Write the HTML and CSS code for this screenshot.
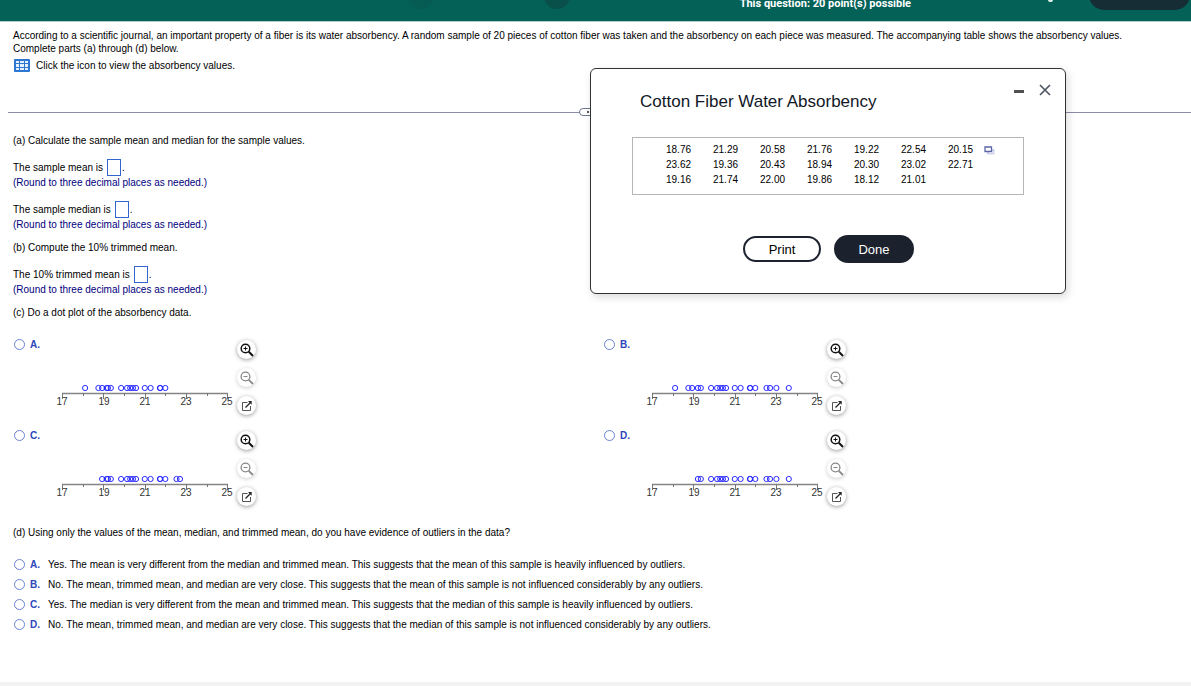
FILE: index.html
```html
<!DOCTYPE html>
<html lang="en">
<head>
<meta charset="utf-8">
<title>Cotton Fiber Water Absorbency</title>
<link rel="stylesheet" href="styles.css">
</head>
<body>
<svg class="defs" aria-hidden="true">
  <defs>
    <g id="axis">
      <path d="M10 21.5H176" stroke="#858585" stroke-width="1.300" fill="none"/>
      <path d="M10.5 21v6M51.5 21v6M93.5 21v6M134.5 21v6M175.500 21v6M31.5 21v3M72.5 21v3M113.5 21v3M155.5 21v3" stroke="#777" fill="none"/>
      <text x="10" y="33">17</text><text x="52" y="33">19</text><text x="93" y="33">21</text><text x="134" y="33">23</text><text x="175" y="33">25</text>
    </g>
    <g id="middle">
      <circle cx="55.9" cy="16" r="2.6"/><circle cx="58.8" cy="16" r="2.6"/><circle cx="69.1" cy="16" r="2.6"/><circle cx="75.1" cy="16" r="2.6"/><circle cx="78.2" cy="16" r="2.6"/><circle cx="80.9" cy="16" r="2.6"/><circle cx="84" cy="16" r="2.6"/><circle cx="92.8" cy="16" r="2.6"/><circle cx="98.6" cy="16" r="2.6"/><circle cx="107.9" cy="16" r="2.6"/><circle cx="108.3" cy="16" r="2.6"/><circle cx="113.3" cy="16" r="2.6"/>
    </g>
    <g id="low"><circle cx="33.1" cy="16" r="2.6"/><circle cx="46.4" cy="16" r="2.6"/><circle cx="50.1" cy="16" r="2.6"/></g>
    <g id="high"><circle cx="124.5" cy="16" r="2.6"/><circle cx="128" cy="16" r="2.6"/><circle cx="134.4" cy="16" r="2.6"/><circle cx="146.8" cy="16" r="2.6"/></g>
    <symbol id="zoom-in" viewBox="0 0 14 14"><circle cx="5.5" cy="5.5" r="4.3" fill="none" stroke="currentColor" stroke-width="1.5"/><path d="M3.5 5.5h4M5.5 3.5v4" stroke="currentColor" fill="none"/><path d="M8.8 8.8l4.2 4.2" stroke="currentColor" stroke-width="2" fill="none"/></symbol>
    <symbol id="zoom-out" viewBox="0 0 14 14"><circle cx="5.5" cy="5.5" r="4.4" fill="none" stroke="currentColor" stroke-width="1.3"/><path d="M3.5 5.5h4" stroke="currentColor" fill="none"/><path d="M8.8 8.8l4.2 4.2" stroke="currentColor" stroke-width="1.8" fill="none"/></symbol>
    <symbol id="expand" viewBox="0 0 14 14"><path d="M7.500 3.500H2.500v8h8V7" stroke="#555" fill="none"/><path d="M5.500 8.500l5-5" stroke="#222" fill="none" stroke-width="1.300"/><path d="M8 2h3.700v3.700z" fill="#222"/></symbol>
  </defs>
</svg>
<header class="topbar">
  <span class="dot dot-soft"></span><span class="dot dot-dark"></span>
  <strong class="points">This question: 20 point(s) possible</strong>
  <span class="mark"></span>
  <span class="pill"></span>
</header>
<main class="page">
  <section class="intro">
    <p>According to a scientific journal, an important property of a fiber is its water absorbency. A random sample of 20 pieces of cotton fiber was taken and the absorbency on each piece was measured. The accompanying table shows the absorbency values.<br>Complete parts (a) through (d) below.</p>
    <button class="data-link" type="button">
      <svg width="16" height="13" viewBox="0 0 16 13"><rect width="16" height="13" rx="1" fill="#2d76d2"/><path d="M2 2h3v2H2zM6 2h4v2H6zM11 2h3v2h-3zM2 5h3v3H2zM6 5h4v3H6zM11 5h3v3h-3zM2 9h3v2H2zM6 9h4v2H6zM11 9h3v2h-3z" fill="#e4f1ff"/></svg>
      Click the icon to view the absorbency values.</button>
  </section>
  <div class="divider"><span class="handle"></span></div>
  <section class="work">
    <p>(a) Calculate the sample mean and median for the sample values.</p>
    <div class="answer"><label for="mean">The sample mean is</label><input id="mean" type="text">.</div>
    <p class="note">(Round to three decimal places as needed.)</p>
    <div class="answer"><label for="median">The sample median is</label><input id="median" type="text">.</div>
    <p class="note">(Round to three decimal places as needed.)</p>
    <p class="part">(b) Compute the 10% trimmed mean.</p>
    <div class="answer"><label for="trimmed">The 10% trimmed mean is</label><input id="trimmed" type="text">.</div>
    <p class="note">(Round to three decimal places as needed.)</p>
    <p class="part">(c) Do a dot plot of the absorbency data.</p>
  </section>
  <section class="plots">
    <div class="plot">
      <label class="choice"><input type="radio" name="plot"><b>A.</b></label>
      <svg class="chart" width="186" height="36" viewBox="0 0 186 36"><use href="#low"/><circle cx="54.6" cy="16" r="2.6"/><use href="#middle"/><use href="#axis"/></svg>
      <div class="tools"><button type="button" aria-label="Zoom in"><svg><use href="#zoom-in"/></svg></button><button class="off" type="button" aria-label="Zoom out"><svg><use href="#zoom-out"/></svg></button><button type="button" aria-label="Open"><svg><use href="#expand"/></svg></button></div>
    </div>
    <div class="plot">
      <label class="choice"><input type="radio" name="plot"><b>B.</b></label>
      <svg class="chart" width="186" height="36" viewBox="0 0 186 36"><use href="#low"/><use href="#middle"/><use href="#high"/><use href="#axis"/></svg>
      <div class="tools"><button type="button" aria-label="Zoom in"><svg><use href="#zoom-in"/></svg></button><button class="off" type="button" aria-label="Zoom out"><svg><use href="#zoom-out"/></svg></button><button type="button" aria-label="Open"><svg><use href="#expand"/></svg></button></div>
    </div>
    <div class="plot">
      <label class="choice"><input type="radio" name="plot"><b>C.</b></label>
      <svg class="chart" width="186" height="36" viewBox="0 0 186 36"><circle cx="50.1" cy="16" r="2.6"/><circle cx="54.6" cy="16" r="2.6"/><use href="#middle"/><circle cx="124.5" cy="16" r="2.6"/><circle cx="128" cy="16" r="2.6"/><use href="#axis"/></svg>
      <div class="tools"><button type="button" aria-label="Zoom in"><svg><use href="#zoom-in"/></svg></button><button class="off" type="button" aria-label="Zoom out"><svg><use href="#zoom-out"/></svg></button><button type="button" aria-label="Open"><svg><use href="#expand"/></svg></button></div>
    </div>
    <div class="plot">
      <label class="choice"><input type="radio" name="plot"><b>D.</b></label>
      <svg class="chart" width="186" height="36" viewBox="0 0 186 36"><use href="#middle"/><use href="#high"/><use href="#axis"/></svg>
      <div class="tools"><button type="button" aria-label="Zoom in"><svg><use href="#zoom-in"/></svg></button><button class="off" type="button" aria-label="Zoom out"><svg><use href="#zoom-out"/></svg></button><button type="button" aria-label="Open"><svg><use href="#expand"/></svg></button></div>
    </div>
  </section>
  <section class="outliers">
    <p>(d) Using only the values of the mean, median, and trimmed mean, do you have evidence of outliers in the data?</p>
    <div class="options">
      <label class="choice"><input type="radio" name="outlier"><b>A.</b><span>Yes. The mean is very different from the median and trimmed mean. This suggests that the mean of this sample is heavily influenced by outliers.</span></label>
      <label class="choice"><input type="radio" name="outlier"><b>B.</b><span>No. The mean, trimmed mean, and median are very close. This suggests that the mean of this sample is not influenced considerably by any outliers.</span></label>
      <label class="choice"><input type="radio" name="outlier"><b>C.</b><span>Yes. The median is very different from the mean and trimmed mean. This suggests that the median of this sample is heavily influenced by outliers.</span></label>
      <label class="choice"><input type="radio" name="outlier"><b>D.</b><span>No. The mean, trimmed mean, and median are very close. This suggests that the median of this sample is not influenced considerably by any outliers.</span></label>
    </div>
  </section>
</main>
<footer class="bottom"></footer>
<div class="dialog" role="dialog" aria-labelledby="dialog-title">
  <div class="window-buttons">
    <button type="button" aria-label="Minimize"><svg width="12" height="12" viewBox="0 0 12 12"><path d="M1 7.500h10" stroke="#505050" stroke-width="3"/></svg></button>
    <button type="button" aria-label="Close"><svg width="12" height="12" viewBox="0 0 12 12"><path d="M1 1l10 10M11 1L1 11" stroke="#4b5460" stroke-width="1.600"/></svg></button>
  </div>
  <h2 id="dialog-title">Cotton Fiber Water Absorbency</h2>
  <div class="data">
    <table>
      <tr><td>18.76</td><td>21.29</td><td>20.58</td><td>21.76</td><td>19.22</td><td>22.54</td><td>20.15</td></tr>
      <tr><td>23.62</td><td>19.36</td><td>20.43</td><td>18.94</td><td>20.30</td><td>23.02</td><td>22.71</td></tr>
      <tr><td>19.16</td><td>21.74</td><td>22.00</td><td>19.86</td><td>18.12</td><td>21.01</td><td></td></tr>
    </table>
    <button type="button" aria-label="Copy data"><svg width="11" height="9" viewBox="0 0 11 9"><path d="M3 3h7.500v5.500H3z" fill="#cfd3ec"/><path d="M5 5h3.500v2H5z" fill="#fff"/><path d="M1 1h6.500v4.500H1z" fill="#fff" stroke="#5b66a8" stroke-width="1.300"/></svg></button>
  </div>
  <div class="actions"><button class="print" type="button">Print</button><button class="done" type="button">Done</button></div>
</div>
</body>
</html>
```
FILE: styles.css
```css
* { box-sizing: border-box; }
body { margin: 0; min-height: 100vh; display: flex; flex-direction: column; background: #fff; color: #000; font: 10px/13px "Liberation Sans", Arial, sans-serif; position: relative; }
p, h2 { margin: 0; }
button { border: 0; padding: 0; background: none; font: inherit; color: inherit; cursor: pointer; }
.defs { position: absolute; width: 0; height: 0; }
.topbar { height: 22px; flex: none; background: #046157; border-bottom: 1px solid #b5cfcc; display: flex; justify-content: flex-end; align-items: flex-start; overflow: hidden; position: relative; color: #fff; }
.points { font-family: Roboto, "Liberation Sans", sans-serif; font-size: 11px; line-height: 14px; margin: -3px 137px 0 0; }
.mark { width: 5px; height: 2px; border-radius: 0 0 3px 3px; background: #dfecea; margin-right: 36px; }
.pill { width: 101px; height: 30px; margin: -20px 1px 0 0; border-radius: 15px; background: #172d35; }
.dot { position: absolute; top: -17px; width: 26px; height: 26px; border-radius: 50%; }
.dot-soft { left: 408px; background: #065b52; }
.dot-dark { left: 544px; background: #0a504a; }
.page { flex: 1; padding: 7px 8px 0; }
.intro { padding: 0 5px; }
.data-link { display: flex; align-items: center; gap: 6px; margin-top: 4px; padding-left: 1px; }
.divider { height: 1px; background: #8b8da8; margin: 40px -8px 0 0; position: relative; }
.handle { position: absolute; left: 571px; top: -4px; width: 34px; height: 8px; border: 1px solid #6f7892; border-radius: 4px; background: #fff; }
.handle::after { content: ""; position: absolute; left: 7px; top: 2px; width: 2px; height: 2px; background: #555; }
.work { padding: 21px 5px 0; }
.answer { display: flex; align-items: center; gap: 4px; height: 18px; margin-top: 11px; }
.answer input { width: 14px; height: 17px; padding: 0; border: 1px solid #3366cc; background: #fff; margin-right: -3px; }
.note { color: #00007d; }
.part { margin-top: 10px; }
.plots { display: grid; grid-template-columns: 590px 1fr; row-gap: 7px; margin-top: 18px; padding-left: 6px; }
.plot { display: flex; height: 84px; }
.choice { display: flex; align-items: center; gap: 5px; height: 13px; }
.choice input { appearance: none; width: 11px; height: 11px; margin: 0; border: 1px solid #6b83d4; border-radius: 50%; background: #fff; }
.choice b { width: 14px; color: #2d46b9; }
.plot .choice { width: 38px; margin-top: 1px; }
.chart { margin-top: 35px; fill: none; stroke: #2a2aff; stroke-width: 1; overflow: visible; }
#axis text { fill: #333; stroke: none; font-size: 10px; text-anchor: middle; }
.tools { display: flex; flex-direction: column; gap: 9px; margin: 3px 0 0 -1px; }
.tools button { width: 19px; height: 19px; border-radius: 50%; background: #fff; box-shadow: 0 1px 4px #999; display: grid; place-items: center; color: #111; }
.tools .off { color: #888; box-shadow: 0 1px 4px #ccc; }
.tools svg { width: 14px; height: 14px; }
.outliers { padding: 14px 5px 0; }
.options { display: flex; flex-direction: column; gap: 7px; margin-top: 19px; padding-left: 1px; }
.options span { margin-left: -1px; }
.bottom { height: 4px; background: #f2f2f2; }
.dialog { position: absolute; top: 68px; left: 590px; width: 476px; padding: 15px 14px 30px 41px; border: 1px solid #333; border-radius: 6px; background: #fff; box-shadow: 2px 3px 8px rgba(0,0,0,.15); }
.window-buttons { display: flex; justify-content: flex-end; gap: 14px; height: 12px; }
.window-buttons svg { display: block; }
h2 { font-size: 17px; line-height: 20px; font-weight: 400; padding-left: 8px; margin-top: -4px; color: #111827; }
.data { display: flex; align-items: flex-start; width: 392px; margin-top: 25px; padding: 4px 0 7px 22px; border: 1px solid #b5b5b5; }
table { border-collapse: collapse; }
td { width: 47px; height: 15px; padding: 0; text-align: center; }
.data button { margin-top: 4px; }
.data svg { display: block; }
.actions { display: flex; align-items: center; justify-content: center; gap: 13px; margin: 40px 26px 0 0; font-size: 13px; }
.actions button { border-radius: 14px; }
.print { width: 78px; height: 26px; border: 2px solid #1c2230; }
.done { width: 80px; height: 28px; background: #1c222d; color: #fff; }
```
